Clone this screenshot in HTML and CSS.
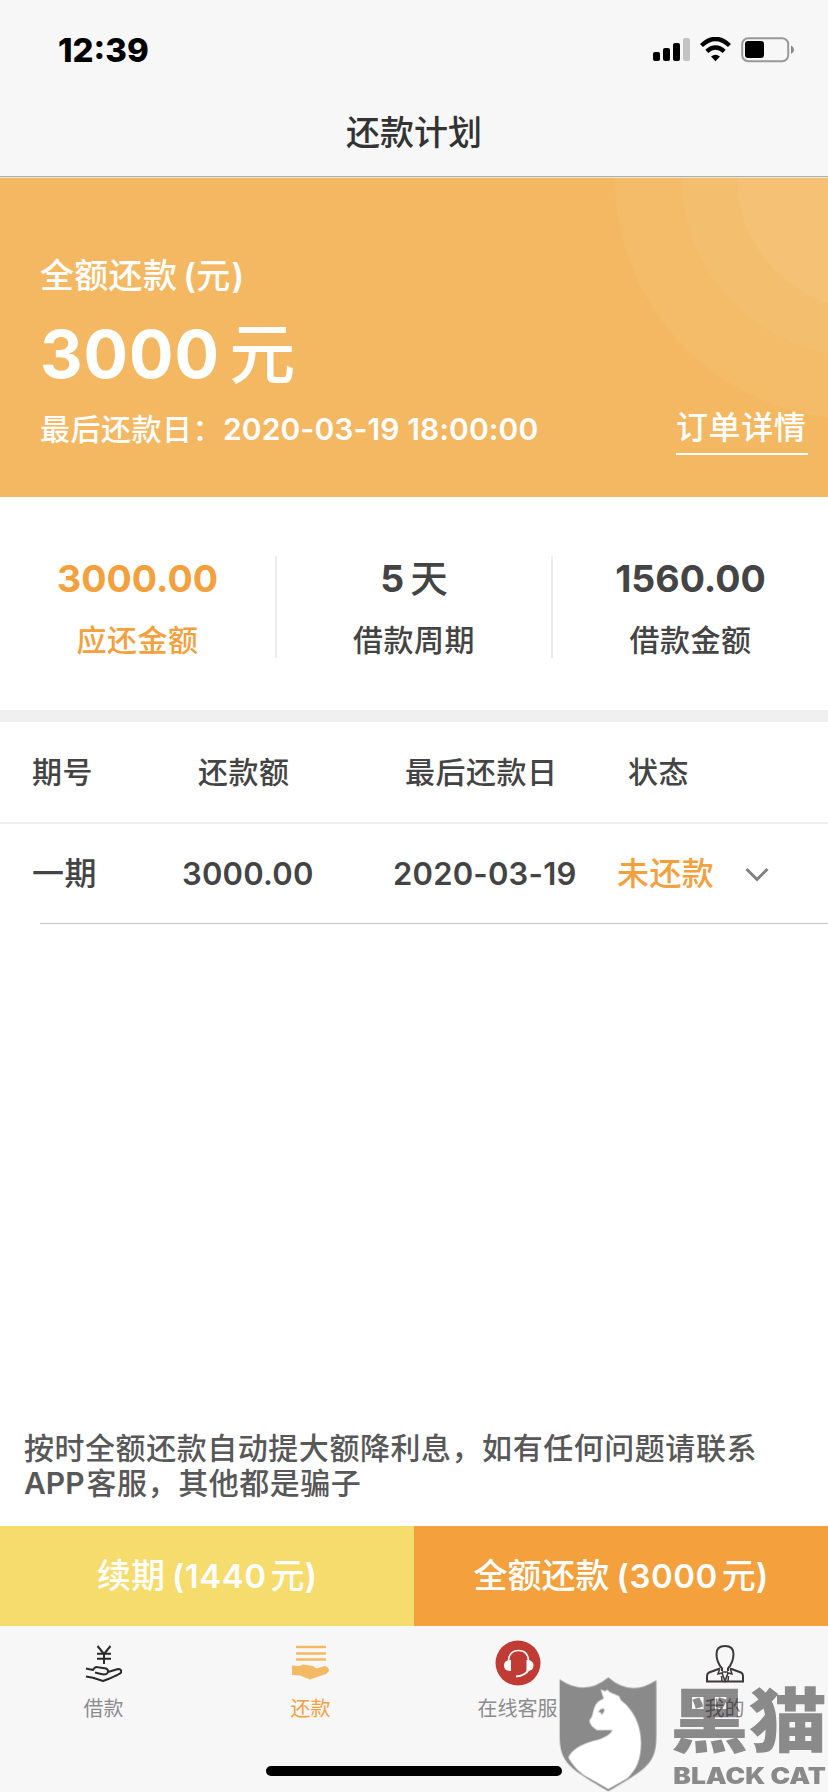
FILE: index.html
```html
<!DOCTYPE html>
<html lang="zh-CN">
<head>
    <meta charset="UTF-8">
    <meta name="viewport" content="width=device-width, initial-scale=1.0">
    <title>还款计划</title>
    <link rel="stylesheet" href="styles.css">
</head>
<body>

<div class="page">

    <!-- Header -->
    <header class="header">
        <div class="status-bar">
            <span class="time">12:39</span>
            <svg class="status-icons" width="142" height="26" viewBox="0 0 142 26">
                <rect x="0" y="15" width="7" height="9" rx="2"/>
                <rect x="10" y="11" width="7" height="13" rx="2"/>
                <rect x="20" y="6" width="7" height="18" rx="2"/>
                <rect x="30" y="1" width="7" height="23" rx="2" fill="#c4c4c4"/>
                <path d="M48.5 8.5 Q62.5 -4.5 76.5 8.5" fill="none" stroke="#000" stroke-width="4.4"/>
                <path d="M53.8 14.3 Q62.5 6.6 71.2 14.3" fill="none" stroke="#000" stroke-width="4.4"/>
                <path d="M58 19.6 Q62.5 15.8 67 19.6 L62.5 24.2 Z"/>
                <rect x="89.2" y="1.2" width="46" height="23" rx="6" fill="none" stroke="#999" stroke-width="2"/>
                <rect x="92" y="4" width="19" height="17" rx="3"/>
                <path d="M138 8.5 Q141 10 141 12.7 Q141 15.500 138 17 Z" fill="#888"/>
            </svg>
        </div>
        <h1 class="title">还款计划</h1>
    </header>

    <!-- Total amount -->
    <section class="summary">
        <svg class="rings" width="213" height="240" viewBox="0 0 213 240">
            <circle cx="240.500" cy="0" r="240.500" fill="#f4bc69"/>
            <circle cx="245" cy="0" r="178" fill="#f3be6d"/>
            <circle cx="253" cy="0" r="131" fill="#f5c175"/>
        </svg>
        <div class="summary-label">全额还款<span class="paren">(</span>元<span class="paren-end">)</span></div>
        <div class="summary-amount"><span class="digits">3000</span>元</div>
        <div class="summary-bottom">
            <div class="summary-date">最后还款日：<span class="digits">2020-03-19 18:00:00</span></div>
            <a class="detail-link">订单详情</a>
        </div>
    </section>

    <!-- Loan info -->
    <section class="stats">
        <div class="stat active">
            <div class="stat-value">3000.00</div>
            <div class="stat-label">应还金额</div>
        </div>
        <div class="stat">
            <div class="stat-value">5<span class="unit">天</span></div>
            <div class="stat-label">借款周期</div>
        </div>
        <div class="stat">
            <div class="stat-value">1560.00</div>
            <div class="stat-label">借款金额</div>
        </div>
    </section>

    <!-- Plan table -->
    <section class="plan">
        <div class="plan-head">
            <span>期号</span>
            <span>还款额</span>
            <span>最后还款日</span>
            <span>状态</span>
        </div>
        <div class="plan-row">
            <span>一期</span>
            <span class="plan-money">3000.00</span>
            <span class="plan-date">2020-03-19</span>
            <span class="unpaid">未还款</span>
            <svg class="chevron" width="24" height="16" viewBox="0 0 24 16">
                <path d="M1.500 3 L12 13.500 L22.500 3" fill="none" stroke="#808080" stroke-width="3"/>
            </svg>
        </div>
    </section>

    <p class="notice">按时全额还款自动提大额降利息，如有任何问题请联系<br><span class="app">APP</span>客服，其他都是骗子</p>

    <!-- Buttons -->
    <div class="actions">
        <button class="btn btn-renew">续期<span class="btn-num">(1440</span>元<span class="btn-end">)</span></button>
        <button class="btn btn-pay">全额还款<span class="btn-num">(3000</span>元<span class="btn-end">)</span></button>
    </div>

    <!-- Tab bar -->
    <nav class="tabs">
        <a class="tab">
            <svg width="46" height="46" viewBox="0 0 46 46">
                <g fill="none" stroke="#2b2b2b" stroke-width="2" stroke-linejoin="round">
                    <path d="M16.500 6 L23 14 L29.500 6 M16 13.700 H30 M16 18.700 H30 M23 13.700 V24"/>
                    <path d="M5 28.500 L12 30 Q14 26.500 17 27.200 L25 28.500 Q28 30 26.500 33 Q25 35.200 20 34 L14 32.500"/>
                    <path d="M27 32 L37 29 Q41 29 40 32.500 Q39 34.500 22 41 L12 37.800 L5 36.500"/>
                </g>
            </svg>
            <span>借款</span>
        </a>
        <a class="tab active">
            <svg width="46" height="46" viewBox="0 0 46 46">
                <path d="M9 7 H37 M9 13.500 H37 M9 19.500 H37" fill="none" stroke="#f4ba63" stroke-width="2.400" stroke-linecap="round"/>
                <path d="M4 25.500 L11 26 L15 24.500 L25 26 L28 28.500 L37 26 Q41 27 41 31 L38 34 L22 39.500 L12 35.500 L4 35 Z" fill="#f4ba63"/>
            </svg>
            <span>还款</span>
        </a>
        <a class="tab">
            <svg width="46" height="46" viewBox="0 0 46 46">
                <circle cx="23" cy="23" r="22.500" fill="#c03b33"/>
                <g fill="none" stroke="#fff" stroke-width="1.600">
                    <path d="M13.500 21 Q14 10.500 23.500 10.500 Q33 10.500 33.500 21"/>
                    <path d="M33.500 30 Q30 36 21 36.500" stroke-width="2"/>
                </g>
                <path d="M16 20 V31 Q9 31 9 25.500 Q9 20 16 20 Z M31.500 20 V31 Q38.500 31 38.500 25.500 Q38.500 20 31.500 20 Z" fill="#fff"/>
            </svg>
            <span>在线客服</span>
        </a>
        <a class="tab">
            <svg width="46" height="46" viewBox="0 0 46 46">
                <g fill="none" stroke="#3c3839" stroke-width="2">
                    <path d="M14.500 14 Q14.500 6 23 6 Q31.500 6 31.500 14 Q31.500 22 26 28.500 V31 M14.500 14 Q14.500 22 20 28.500 V31"/>
                    <path d="M18 28.500 L7 32.500 Q5 33.500 5 36 V41.500 H41 V36 Q41 33.500 39 32.500 L28 28.500"/>
                    <path d="M17.500 29.500 L16 34 L20 33 L23 41 L26 33 L30 34 L28.500 29.500 M20 32 H26 M19.500 36 L20 41 M26.500 36 L26 41" stroke-width="1.500"/>
                </g>
            </svg>
            <span>我的</span>
        </a>
    </nav>
    <div class="home-indicator"></div>

    <!-- Black Cat stamp -->
    <svg class="stamp" width="269.330" height="116" viewBox="56 168 808 348">
        <g class="stamp-ink">
            <path d="M58 178 Q135 230 204 172 Q272 232 348 180 V350 C348 430 318 448 204 514 C92 448 58 430 58 350 Z"/>
            <text class="stamp-name" transform="translate(390 382) scale(1 .92)" textLength="470" lengthAdjust="spacingAndGlyphs">黑猫</text>
            <text class="stamp-en" x="399" y="493" textLength="458" lengthAdjust="spacingAndGlyphs">BLACK CAT</text>
        </g>
        <path d="M181 208 L194 214 L201 209 L208 216 L236 228 L242 241 C280 270 302 315 302 368 C302 420 288 448 262 474 L204 507 L128 464 Q98 440 84 412 C94 390 120 374 162 362 C190 354 208 346 216 330 L170 330 C155 322 145 308 148 299 C160 288 156 272 165 256 C172 243 182 240 190 236 Z" fill="#fff"/>
        <path d="M174 276 Q180 265 191 266 Q194 278 182 285 Q186 276 174 276 Z" fill="#8b898a"/>
    </svg>

</div>

</body>
</html>
```
FILE: styles.css
```css
/* General Styling */
* {
    box-sizing: border-box;
}

body {
    margin: 0;
    background-color: #fff;
    font-family: Inter, "Noto Sans CJK SC", sans-serif;
    font-weight: 500;
    color: #444;
}

.page {
    position: relative;
    width: 828px;
    height: 1792px;
    overflow: hidden;
    display: flex;
    flex-direction: column;
}

/* Header */
.header {
    height: 178px;
    background-color: #f7f7f7;
    border-bottom: 1px solid #f3e3cb;
    box-shadow: inset 0 -1px 0 #adb0b2;
}

.status-bar {
    height: 88px;
    padding: 12px 33px 0 58px;
    display: flex;
    justify-content: space-between;
    align-items: flex-start;
}

.time {
    font-size: 33px;
    line-height: 40px;
    font-weight: 800;
    color: #000;
    margin-top: 18px;
}

.status-icons {
    margin-top: 25px;
}

.title {
    margin: 0;
    font-size: 34px;
    line-height: 89px;
    font-weight: 500;
    color: #333;
    text-align: center;
}

/* Total amount */
.summary {
    position: relative;
    height: 319px;
    padding: 76px 20px 0 40px;
    background-color: #f4b862;
    color: #fff;
}

.rings {
    position: absolute;
    top: 0;
    right: 0;
}

.summary-label {
    font-size: 34px;
    line-height: 44px;
    letter-spacing: 0.3px;
}

.paren {
    margin-left: 6px;
    font-weight: 600;
}

.paren-end {
    margin-left: 1px;
    font-weight: 600;
}

.summary-amount {
    font-size: 66px;
    line-height: 80px;
    margin-top: 16px;
}

.summary-amount .digits {
    font-weight: 700;
    letter-spacing: 1px;
    margin-right: 9px;
}

.summary-bottom {
    display: flex;
    justify-content: space-between;
    margin-top: 13px;
}

.summary-date {
    font-size: 30px;
    line-height: 44px;
    letter-spacing: 0.5px;
}

.summary-date .digits {
    font-size: 30px;
    font-weight: 600;
    letter-spacing: 0.1px;
}

.detail-link {
    position: relative;
    z-index: 1;
    width: 132px;
    height: 48px;
    font-size: 32px;
    line-height: 42px;
    letter-spacing: 0.6px;
    border-bottom: 2px solid #fff;
}

/* Loan info */
.stats {
    height: 225px;
    padding-top: 59px;
    border-bottom: 12px solid #f0f0f0;
    display: grid;
    grid-template-columns: 277px 276px 275px;
}

.stat {
    height: 102px;
    text-align: center;
    border-right: 2px solid #ececec;
}

.stat:last-child {
    border-right: none;
}

.stat-value {
    font-size: 37.5px;
    line-height: 46px;
    font-weight: 700;
}

.stat-value .unit {
    margin-left: 6px;
    font-weight: 500;
}

.stat-label {
    font-size: 30px;
    line-height: 40px;
    letter-spacing: 0.5px;
    margin-top: 18px;
}

.stat.active {
    color: #f3a03d;
}

/* Plan table */
.plan-head,
.plan-row {
    display: grid;
    align-items: center;
    line-height: 44px;
}

.plan-head {
    grid-template-columns: 166px 207px 223px 1fr;
    height: 102px;
    padding-left: 32px;
    border-bottom: 2px solid #f0f0f0;
    font-size: 30px;
    letter-spacing: 0.5px;
}

.plan-row {
    grid-template-columns: 150px 211px 224px 128px 1fr;
    height: 99px;
    padding-left: 32px;
    font-size: 32px;
    letter-spacing: 0.4px;
}

.plan::after {
    content: "";
    display: block;
    height: 1px;
    margin-left: 40px;
    background-color: #c4c4c6;
}

.plan-money,
.plan-date {
    font-size: 31px;
    font-weight: 600;
    letter-spacing: 0.2px;
}

.unpaid {
    color: #f3a03d;
}

.notice {
    margin: auto 0 25px;
    padding-left: 24px;
    font-size: 30px;
    line-height: 35px;
    letter-spacing: 0.54px;
    color: #585858;
}

.notice .app {
    margin-right: 2px;
    font-weight: 600;
    letter-spacing: 0;
}

/* Buttons */
.actions {
    display: flex;
    height: 100px;
}

.btn {
    flex: 1;
    padding: 0;
    border: none;
    font: inherit;
    font-size: 34px;
    line-height: 44px;
    color: #fff;
}

.btn-renew {
    background-color: #f6db6d;
}

.btn-pay {
    background-color: #f3a03d;
}

.btn-num {
    font-size: 33px;
    font-weight: 600;
    letter-spacing: 0.5px;
    margin: 0 4px 0 7px;
}

.btn-end {
    font-weight: 600;
}

/* Tab bar */
.tabs {
    display: flex;
    height: 166px;
    background-color: #f7f7f7;
}

.tab {
    flex: 1;
    display: flex;
    flex-direction: column;
    align-items: center;
    padding-top: 14px;
    font-size: 20px;
    line-height: 28px;
    font-weight: 400;
    color: #8c8c8f;
}

.tab span {
    margin-top: 9px;
}

.tab.active {
    color: #f3a03d;
}

.home-indicator {
    position: absolute;
    left: 266px;
    bottom: 16px;
    width: 296px;
    height: 10px;
    border-radius: 5px;
    background-color: #000;
}

/* Black Cat stamp */
.stamp {
    position: absolute;
    right: 0;
    bottom: 0;
}

.stamp-ink {
    fill: #908e8f;
    mix-blend-mode: multiply;
}

.stamp-name {
    font-family: "Noto Sans CJK SC", sans-serif;
    font-size: 230px;
    font-weight: 900;
}

.stamp-en {
    font-size: 67px;
    font-weight: 900;
}
```
